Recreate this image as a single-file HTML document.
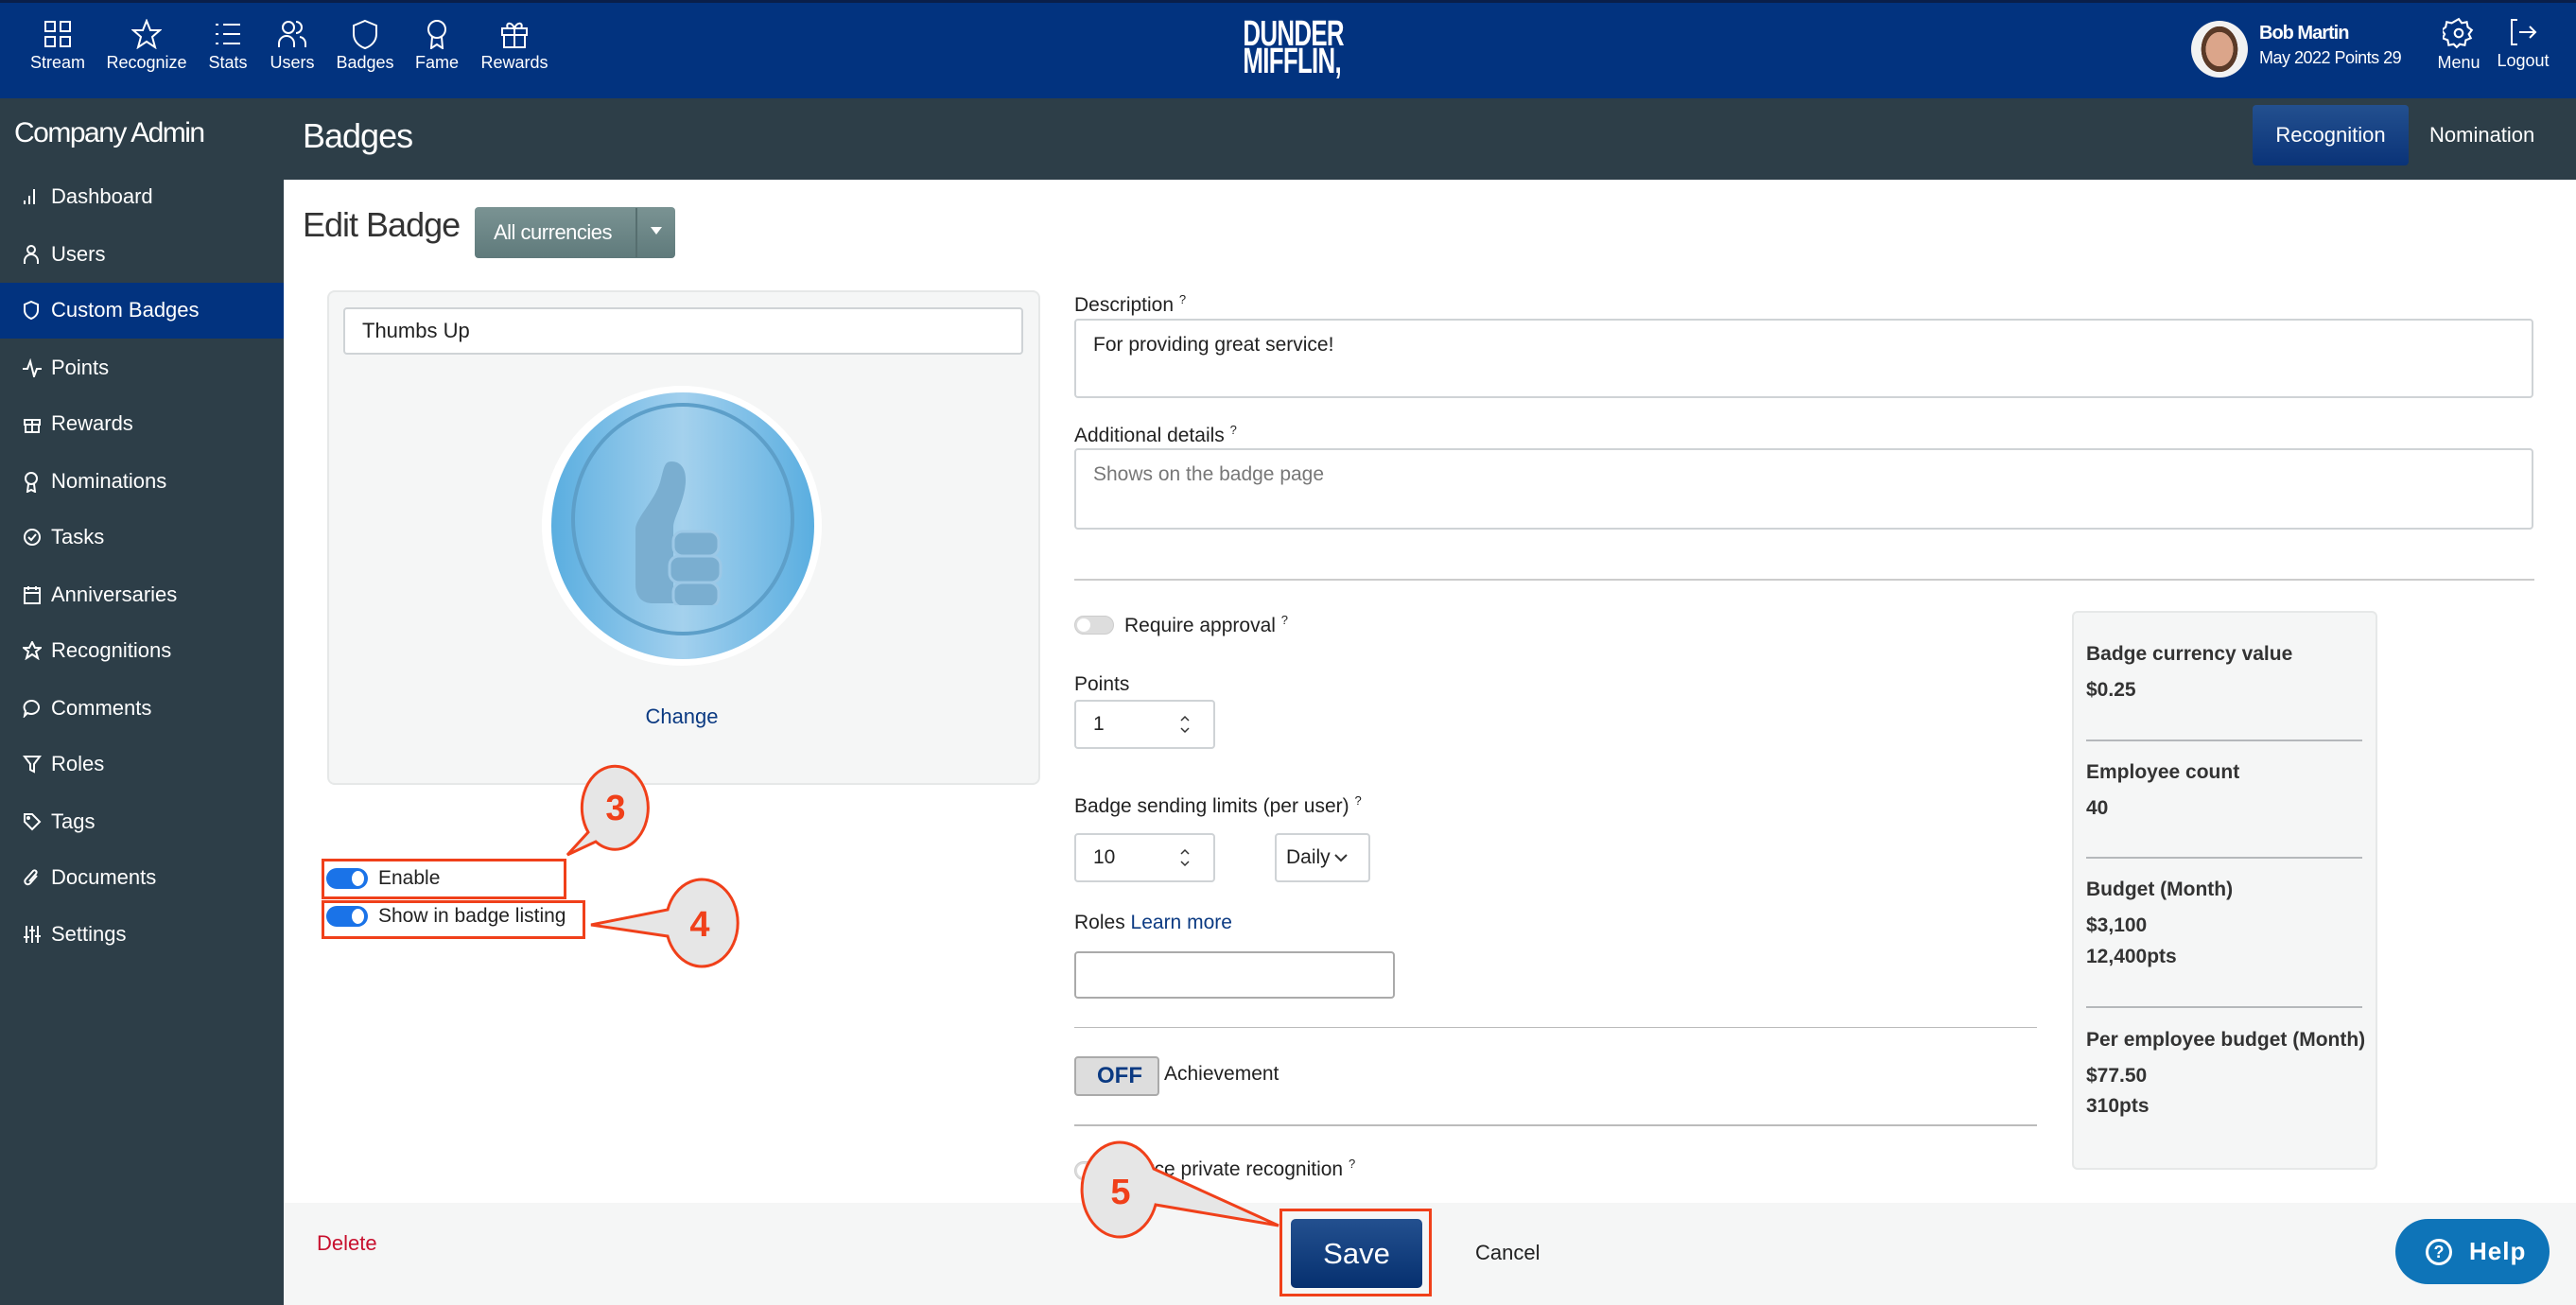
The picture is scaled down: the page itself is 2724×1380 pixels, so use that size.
<!DOCTYPE html>
<html><head><meta charset="utf-8"><style>
*{margin:0;padding:0;box-sizing:border-box}
body{width:2724px;height:1380px;overflow:hidden;background:#fff;font-family:"Liberation Sans",sans-serif;color:#222;position:relative}
.a{position:absolute}
.top{left:0;top:0;width:2724px;height:104px;background:#02337f;border-top:3px solid #0a1f4a}
.nav{color:#fff;font-size:18px;text-align:center;width:100px;margin-left:-50px}
.nav svg{display:block;margin:0 auto 4px}
.side{left:0;top:104px;width:300px;height:1276px;background:#2d3e48}
.sub{left:300px;top:104px;width:2424px;height:86px;background:#2d3e48}
.si{left:0;width:300px;height:60px;color:#fff;font-size:22px;line-height:60px;padding-left:54px}
.si svg{position:absolute;left:24px;top:20px}
.lbl{font-size:21px;color:#222}
.inp{background:#fff;border:2px solid #cfd3d6;border-radius:4px}
.hr{height:2px;background:#ccc}
.st{font-size:21px;font-weight:bold;color:#333;left:2206px}
.red{border:3px solid #f0401a}
.tog{width:44px;height:22px;border-radius:11px;background:#1a73e8}
.tog:after{content:"";position:absolute;right:4px;top:3px;width:13px;height:16px;border-radius:50%;background:#fff}
.togoff{width:42px;height:20px;border-radius:10px;background:#ddd;border:1px solid #ccc}
.togoff:after{content:"";position:absolute;left:2px;top:2px;width:14px;height:14px;border-radius:50%;background:#fff}
</style></head><body>
<div class="a top"></div>
<div class="a nav" style="left:61px;top:20px"><svg width="32" height="32" viewBox="0 0 32 32" fill="none" stroke="#fff" stroke-width="2"><rect x="3" y="3" width="10" height="10"/><rect x="19" y="3" width="10" height="10"/><rect x="3" y="19" width="10" height="10"/><rect x="19" y="19" width="10" height="10"/></svg>Stream</div>
<div class="a nav" style="left:155px;top:20px"><svg width="32" height="32" viewBox="0 0 32 32" fill="none" stroke="#fff" stroke-width="2"><path d="M16 2l4 10h10l-8 7 3 11-9-6-9 6 3-11-8-7h10z"/></svg>Recognize</div>
<div class="a nav" style="left:241px;top:20px"><svg width="32" height="32" viewBox="0 0 32 32" fill="none" stroke="#fff" stroke-width="2"><path d="M11 6h18M11 16h18M11 26h18M3 6h3M3 16h3M3 26h3"/></svg>Stats</div>
<div class="a nav" style="left:309px;top:20px"><svg width="32" height="32" viewBox="0 0 32 32" fill="none" stroke="#fff" stroke-width="2"><circle cx="12" cy="9" r="6"/><path d="M2 30v-4a8 8 0 0 1 16 0v4M20 3a6 6 0 0 1 0 12M24 19a7 7 0 0 1 6 7v4"/></svg>Users</div>
<div class="a nav" style="left:386px;top:20px"><svg width="32" height="32" viewBox="0 0 32 32" fill="none" stroke="#fff" stroke-width="2"><path d="M16 2l12 5v9c0 8-6 13-12 15C10 29 4 24 4 16V7z"/></svg>Badges</div>
<div class="a nav" style="left:462px;top:20px"><svg width="32" height="32" viewBox="0 0 32 32" fill="none" stroke="#fff" stroke-width="2"><circle cx="16" cy="11" r="9"/><path d="M11 19l-1 12 6-4 6 4-1-12"/></svg>Fame</div>
<div class="a nav" style="left:544px;top:20px"><svg width="32" height="32" viewBox="0 0 32 32" fill="none" stroke="#fff" stroke-width="2"><rect x="3" y="10" width="26" height="7"/><rect x="5" y="17" width="22" height="13"/><path d="M16 10v20M16 10c-3-8-10-6-7 0M16 10c3-8 10-6 7 0"/></svg>Rewards</div>
<div class="a" style="left:1292px;top:22px;width:140px;color:#fff;font-weight:bold;font-size:38px;line-height:29px;text-align:center;transform:scaleX(.68);letter-spacing:-1px">DUNDER<br>MIFFLIN,</div>
<div class="a" style="left:2317px;top:22px;width:60px;height:60px;border-radius:50%;background:radial-gradient(ellipse 40% 50% at 50% 50%,#dba58a 0 60%,#5a3a28 61% 80%,#f2f2f2 81%)"></div>
<div class="a" style="left:2389px;top:24px;color:#fff;font-size:20px;font-weight:bold;letter-spacing:-1px">Bob Martin</div>
<div class="a" style="left:2389px;top:51px;color:#fff;font-size:18px;letter-spacing:-.5px">May 2022 Points 29</div>
<div class="a nav" style="left:2600px;top:18px;width:60px;margin-left:-30px"><svg width="34" height="34" viewBox="0 0 32 32" fill="none" stroke="#fff" stroke-width="2"><circle cx="16" cy="16" r="4"/><path d="M16 2l3 4 5-1 1 5 4 3-3 4 2 4-5 2-1 5-5-1-3 3-3-3-5 1-1-5-5-2 2-4-3-4 4-3 1-5 5 1z"/></svg>Menu</div>
<div class="a nav" style="left:2668px;top:18px;width:60px;margin-left:-30px"><svg width="34" height="32" viewBox="0 0 32 32" fill="none" stroke="#fff" stroke-width="2"><path d="M10 3H4v26h6M12 16h17M23 10l6 6-6 6"/></svg>Logout</div>

<div class="a side"></div>
<div class="a sub"></div>
<div class="a" style="left:15px;top:124px;color:#fff;font-size:30px;letter-spacing:-1.5px">Company Admin</div>
<div class="a" style="left:320px;top:123px;color:#fff;font-size:36px;font-weight:300;letter-spacing:-1px">Badges</div>
<div class="a" style="left:2382px;top:111px;width:165px;height:64px;border-radius:4px;background:linear-gradient(#23508f,#0a3378);color:#fff;font-size:22px;line-height:64px;text-align:center">Recognition</div>
<div class="a" style="left:2569px;top:111px;color:#fff;font-size:22px;line-height:64px">Nomination</div>

<div class="a" style="left:0;top:299px;width:300px;height:59px;background:#02337f"></div>
<div class="a si" style="top:178px"><svg width="16" height="18"><path d="M2 18v-4M7 18v-9M12 18V2" stroke="#fff" stroke-width="2"/></svg>Dashboard</div>
<div class="a si" style="top:239px"><svg width="18" height="20" fill="none" stroke="#fff" stroke-width="2"><circle cx="9" cy="5" r="4"/><path d="M2 20v-3a7 7 0 0 1 14 0v3"/></svg>Users</div>
<div class="a si" style="top:298px"><svg width="18" height="20" fill="none" stroke="#fff" stroke-width="2"><path d="M9 1l7 3v6c0 5-4 8-7 9-3-1-7-4-7-9V4z"/></svg>Custom Badges</div>
<div class="a si" style="top:359px"><svg width="20" height="20" fill="none" stroke="#fff" stroke-width="2"><path d="M0 11h5l3-8 4 16 3-8h5"/></svg>Points</div>
<div class="a si" style="top:418px"><svg width="20" height="20" fill="none" stroke="#fff" stroke-width="2"><rect x="2" y="6" width="16" height="5"/><rect x="3" y="11" width="14" height="8"/><path d="M10 6v13"/></svg>Rewards</div>
<div class="a si" style="top:479px"><svg width="18" height="22" fill="none" stroke="#fff" stroke-width="2"><circle cx="9" cy="7" r="6"/><path d="M6 13l-1 8 4-2 4 2-1-8"/></svg>Nominations</div>
<div class="a si" style="top:538px"><svg width="20" height="20" fill="none" stroke="#fff" stroke-width="2"><circle cx="10" cy="10" r="8"/><path d="M6 10l3 3 5-6"/></svg>Tasks</div>
<div class="a si" style="top:599px"><svg width="20" height="20" fill="none" stroke="#fff" stroke-width="2"><rect x="2" y="3" width="16" height="16"/><path d="M2 8h16M6 1v4M14 1v4"/></svg>Anniversaries</div>
<div class="a si" style="top:658px"><svg width="20" height="20" fill="none" stroke="#fff" stroke-width="2"><path d="M10 1l3 6h6l-5 4 2 7-6-4-6 4 2-7-5-4h6z"/></svg>Recognitions</div>
<div class="a si" style="top:719px"><svg width="20" height="20" fill="none" stroke="#fff" stroke-width="2"><path d="M10 2a8 7 0 1 1-5 13l-3 3 1-5a8 7 0 0 1 7-11z"/></svg>Comments</div>
<div class="a si" style="top:778px"><svg width="20" height="20" fill="none" stroke="#fff" stroke-width="2"><path d="M2 2h16l-6 8v8l-4-2v-6z"/></svg>Roles</div>
<div class="a si" style="top:839px"><svg width="20" height="20" fill="none" stroke="#fff" stroke-width="2"><path d="M2 2h8l8 8-8 8-8-8z"/><circle cx="6" cy="6" r="1"/></svg>Tags</div>
<div class="a si" style="top:898px"><svg width="20" height="20" fill="none" stroke="#fff" stroke-width="2"><path d="M15 8l-7 8a3 3 0 0 1-5-4l8-9a2 2 0 0 1 3 3l-7 8"/></svg>Documents</div>
<div class="a si" style="top:958px"><svg width="20" height="20" fill="none" stroke="#fff" stroke-width="2"><path d="M4 1v18M10 1v18M16 1v18M1 13h6M7 6h6M13 12h6"/></svg>Settings</div>

<div class="a" style="left:320px;top:217px;font-size:36px;font-weight:300;color:#333;letter-spacing:-1px">Edit Badge</div>
<div class="a" style="left:502px;top:219px;width:212px;height:54px;border-radius:4px;background:linear-gradient(#7a9393,#5f7a7b);color:#fff;font-size:22px;line-height:54px;padding-left:20px;letter-spacing:-.5px">All currencies</div>
<div class="a" style="left:672px;top:220px;width:2px;height:52px;background:#566e6f"></div>
<div class="a" style="left:688px;top:240px;border-left:6px solid transparent;border-right:6px solid transparent;border-top:8px solid #fff"></div>

<div class="a" style="left:346px;top:307px;width:754px;height:523px;background:#f5f6f6;border:2px solid #e6e8e8;border-radius:8px"></div>
<div class="a inp" style="left:363px;top:325px;width:719px;height:50px;font-size:22px;line-height:46px;padding-left:18px">Thumbs Up</div>
<div class="a" style="left:573px;top:408px;width:296px;height:296px;border-radius:50%;background:#fff"></div>
<div class="a" style="left:583px;top:415px;width:278px;height:282px;border-radius:50%;background:linear-gradient(90deg,#5aaee0,#a2d0ee 50%,#5aaee0);"></div>
<div class="a" style="left:604px;top:426px;width:236px;height:246px;border-radius:50%;border:4px solid #5d9fc9;background:linear-gradient(90deg,#6cb6e3,#a4d1ed 50%,#6cb6e3)"></div>
<svg class="a" style="left:660px;top:480px" width="130" height="160" viewBox="0 0 130 160"><path d="M50 8c10 0 18 8 14 30-4 20-12 30-12 40v80H30c-12 0-18-8-18-20V80c0-12 20-30 26-50 4-14 4-22 12-22z" fill="#7aaed0"/><g fill="#7aaed0" stroke="#9cc8e6" stroke-width="3"><rect x="52" y="82" width="48" height="26" rx="10"/><rect x="48" y="108" width="54" height="28" rx="10"/><rect x="52" y="136" width="48" height="26" rx="10"/></g></svg>
<div class="a" style="left:621px;top:745px;width:200px;text-align:center;color:#0b3a82;font-size:22px">Change</div>

<div class="a tog" style="left:345px;top:918px"></div>
<div class="a lbl" style="left:400px;top:917px">Enable</div>
<div class="a tog" style="left:345px;top:958px"></div>
<div class="a lbl" style="left:400px;top:957px">Show in badge listing</div>
<div class="a red" style="left:340px;top:908px;width:259px;height:43px"></div>
<div class="a red" style="left:340px;top:952px;width:279px;height:41px"></div>

<div class="a lbl" style="left:1136px;top:309px">Description <sup style="font-size:13px">?</sup></div>
<div class="a inp" style="left:1136px;top:337px;width:1543px;height:84px;font-size:21px;padding:14px 18px">For providing great service!</div>
<div class="a lbl" style="left:1136px;top:447px">Additional details <sup style="font-size:13px">?</sup></div>
<div class="a inp" style="left:1136px;top:474px;width:1543px;height:86px;font-size:21px;padding:14px 18px;color:#777">Shows on the badge page</div>
<div class="a hr" style="left:1136px;top:612px;width:1544px"></div>
<div class="a togoff" style="left:1136px;top:651px"></div>
<div class="a lbl" style="left:1189px;top:648px">Require approval <sup style="font-size:13px">?</sup></div>
<div class="a lbl" style="left:1136px;top:712px">Points</div>
<div class="a inp" style="left:1136px;top:740px;width:149px;height:52px;font-size:21px;line-height:48px;padding-left:18px">1</div>
<svg class="a" style="left:1246px;top:754px" width="14" height="24"><path d="M3 8l4-4 4 4M3 16l4 4 4-4" stroke="#333" stroke-width="1.5" fill="none"/></svg>
<div class="a lbl" style="left:1136px;top:839px">Badge sending limits (per user) <sup style="font-size:13px">?</sup></div>
<div class="a inp" style="left:1136px;top:881px;width:149px;height:52px;font-size:21px;line-height:48px;padding-left:18px">10</div>
<svg class="a" style="left:1246px;top:895px" width="14" height="24"><path d="M3 8l4-4 4 4M3 16l4 4 4-4" stroke="#333" stroke-width="1.5" fill="none"/></svg>
<div class="a inp" style="left:1348px;top:881px;width:101px;height:52px;font-size:21px;line-height:48px;padding-left:170x;padding-left:10px">Daily</div>
<svg class="a" style="left:1410px;top:901px" width="16" height="12"><path d="M2 3l6 6 6-6" stroke="#333" stroke-width="2" fill="none"/></svg>
<div class="a lbl" style="left:1136px;top:964px">Roles <span style="color:#0b3a82">Learn more</span></div>
<div class="a inp" style="left:1136px;top:1006px;width:339px;height:50px;border-color:#aaa"></div>
<div class="a hr" style="left:1136px;top:1086px;width:1018px;height:1px;background:#bbb"></div>
<div class="a" style="left:1136px;top:1117px;width:90px;height:42px;border:2px solid #aaa;border-radius:4px;background:#ddd;color:#0b3a82;font-weight:bold;font-size:24px;line-height:38px;padding-left:22px">OFF</div>
<div class="a lbl" style="left:1231px;top:1124px">Achievement</div>
<div class="a hr" style="left:1136px;top:1189px;width:1018px;background:#bbb"></div>
<div class="a togoff" style="left:1136px;top:1228px"></div>
<div class="a lbl" style="left:1189px;top:1223px">Force private recognition <sup style="font-size:13px">?</sup></div>

<div class="a" style="left:2191px;top:646px;width:323px;height:591px;background:#f5f6f6;border:2px solid #e6e8e8;border-radius:6px"></div>
<div class="a st" style="top:680px">Badge currency value</div>
<div class="a st" style="top:718px">$0.25</div>
<div class="a hr" style="left:2206px;top:782px;width:292px;background:#b5b8bb"></div>
<div class="a st" style="top:805px">Employee count</div>
<div class="a st" style="top:843px">40</div>
<div class="a hr" style="left:2206px;top:906px;width:292px;background:#b5b8bb"></div>
<div class="a st" style="top:929px">Budget (Month)</div>
<div class="a st" style="top:967px">$3,100</div>
<div class="a st" style="top:1000px">12,400pts</div>
<div class="a hr" style="left:2206px;top:1064px;width:292px;background:#b5b8bb"></div>
<div class="a st" style="top:1088px">Per employee budget (Month)</div>
<div class="a st" style="top:1126px">$77.50</div>
<div class="a st" style="top:1158px">310pts</div>

<div class="a" style="left:300px;top:1272px;width:2424px;height:108px;background:#f5f6f6"></div>
<div class="a" style="left:335px;top:1302px;color:#c8102e;font-size:22px">Delete</div>
<div class="a" style="left:1365px;top:1289px;width:139px;height:73px;border-radius:5px;background:linear-gradient(#23508f,#06306f);color:#fff;font-size:31px;line-height:73px;text-align:center">Save</div>
<div class="a red" style="left:1353px;top:1278px;width:161px;height:93px"></div>
<div class="a" style="left:1560px;top:1312px;font-size:22px">Cancel</div>
<div class="a" style="left:2533px;top:1289px;width:163px;height:69px;border-radius:35px;background:#0e74b8;color:#fff;font-weight:bold;font-size:26px;line-height:69px;padding-left:78px;letter-spacing:1px">Help</div>
<div class="a" style="left:2565px;top:1310px;width:28px;height:28px;border-radius:50%;border:3px solid #fff;color:#fff;font-weight:bold;font-size:18px;line-height:22px;text-align:center">?</div>

<svg class="a" style="left:0;top:0" width="2724" height="1380">
<g fill="#e6e6e6" stroke="#f0401a" stroke-width="3">
<path d="M630 890 L600 904 L622 880 A35 44 0 1 1 630 890 Z"/>
<path d="M706 990 L625 978 L706 962 A38 46 0 1 1 706 990 Z"/>
<path d="M1222 1274 L1352 1296 L1220 1236 A40 50 0 1 0 1222 1274 Z"/>
</g>
<g fill="#f0401a" font-family="Liberation Sans" font-weight="bold" font-size="38" text-anchor="middle">
<text x="651" y="867">3</text><text x="740" y="990">4</text><text x="1185" y="1273">5</text>
</g>
</svg>
</body></html>
